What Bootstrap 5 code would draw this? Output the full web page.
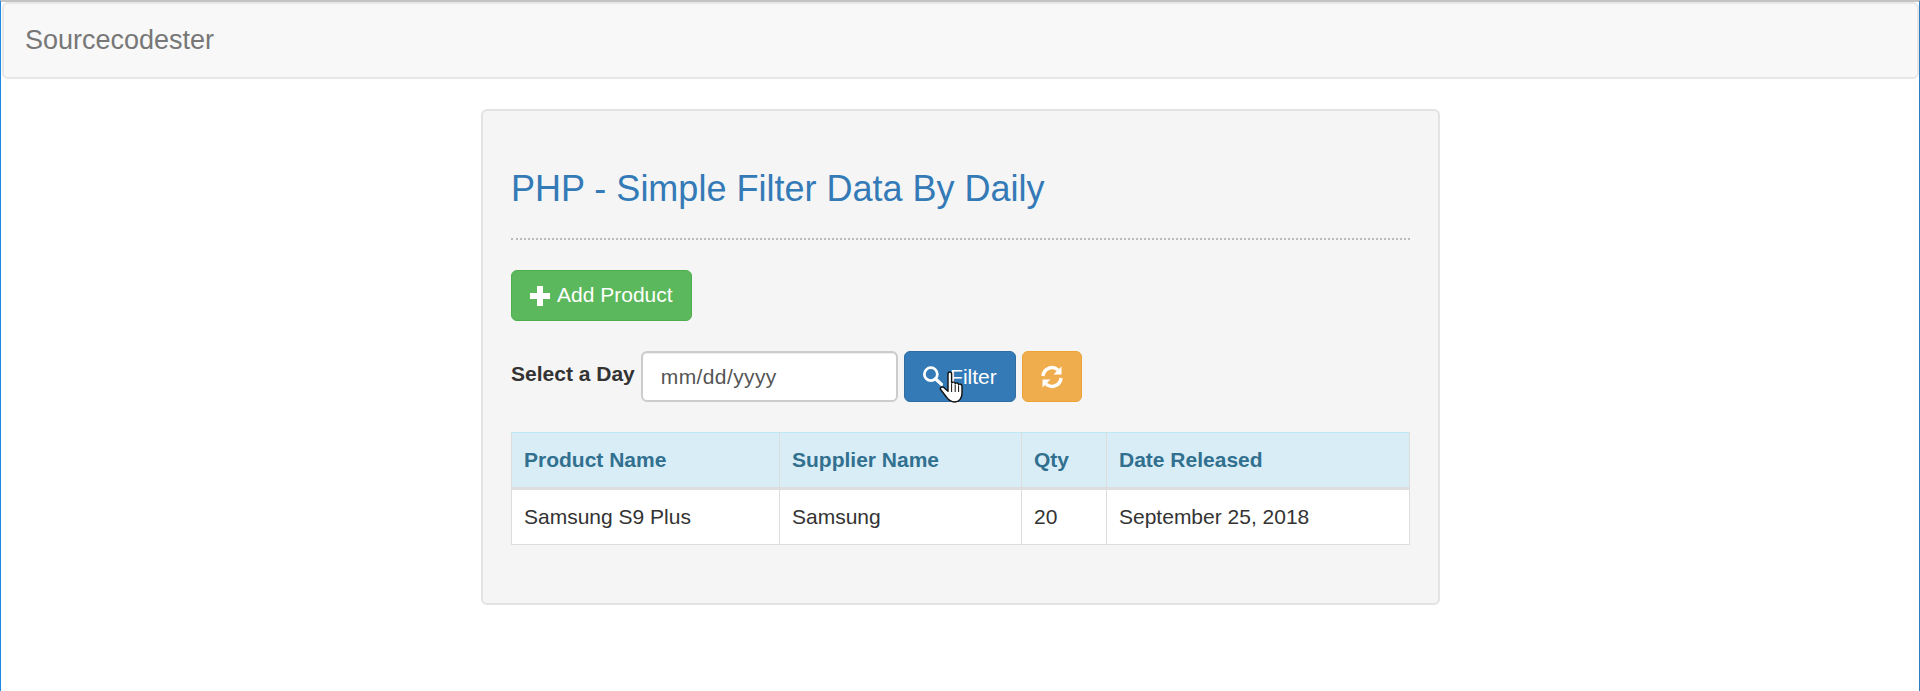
<!DOCTYPE html>
<html lang="en">
<head>
<meta charset="utf-8">
<title>PHP - Simple Filter Data By Daily</title>
<link href="https://cdn.jsdelivr.net/npm/bootstrap@5.3.0/dist/css/bootstrap.min.css" rel="stylesheet">
<style>
html,body{height:100%}
body{font-family:"Liberation Sans",Arial,sans-serif;font-size:21px;line-height:30px;color:#333;background:#fff;border-left:1px solid #1e88e5;border-right:1px solid #2f7fc0;border-top:2px solid #c4c4c4;overflow:hidden}
.top-bar{height:77px;margin:0 0 0 1px;background:#f8f8f8;border:2px solid #e7e7e7;border-radius:6px;padding:0 0 0 21px}
.top-bar .navbar-brand{font-size:27px;color:#777;padding:0;margin:0;line-height:1}
.sheet{width:959px;margin:30px 0 0 480px;height:496px;background:#f5f5f5;border:2px solid #e3e3e3;border-radius:6px;padding:0 28px}
.sheet-title{color:#337ab7;font-size:36px;line-height:40px;font-weight:400;margin:0;padding-top:58px}
.sheet-rule{border:0;border-top:2px dotted #bbb;opacity:1;margin:29px 0 30px}
.act{font-size:21px;line-height:30px;border-width:1.5px;border-radius:6px;padding:9px 18px;height:51px;color:#fff;display:inline-flex;align-items:center;white-space:nowrap}
.act-add{background:#5cb85c;border-color:#4cae4c;width:181px;gap:7px}
.act-add span{margin-top:-2px}
.act-add:hover{background:#5cb85c;border-color:#4cae4c;color:#fff}
.act-filter{background:#337ab7;border-color:#2e6da4;width:112px;position:relative;gap:7px}
.act-filter:hover{background:#337ab7;border-color:#2e6da4;color:#fff}
.act-reset{background:#f0ad4e;border-color:#eea236;width:60px;justify-content:center;padding:0}
.act-reset:hover{background:#f0ad4e;border-color:#eea236;color:#fff}
.filter-row{margin-top:30px;gap:6px}
.filter-label{font-weight:700;margin:0 0 6px;font-size:21px;white-space:nowrap}
.date-box{width:257px;height:51px;font-size:21px;letter-spacing:.4px;border:2px solid #ccc;border-radius:6px;color:#555;padding:9px 18px;flex:none;box-shadow:inset 0 1px 1px rgba(0,0,0,.075);line-height:30px}
.data-table{margin:30px 0 0;width:899px;table-layout:fixed;border-collapse:collapse;font-size:21px;background:#fff}
.data-table th,.data-table td{border:1.5px solid #ddd;padding:12px 12px;line-height:30px;height:56px;vertical-align:middle;color:#333;background:#fff;box-shadow:none}
.data-table thead th{background:#d9edf7;color:#31708f;border-bottom:3px solid #ddd;border-top-color:#bce8f1;font-weight:700}
.c-name{width:268px}.c-supplier{width:242px}.c-qty{width:85px}
.hand{position:absolute;left:34px;top:19px;width:26px;height:32px}
</style>
</head>
<body>
<nav class="navbar top-bar d-flex align-items-center">
  <a class="navbar-brand" href="#">Sourcecodester</a>
</nav>
<main class="sheet">
  <h3 class="sheet-title">PHP - Simple Filter Data By Daily</h3>
  <hr class="sheet-rule">
  <button type="button" class="btn act act-add">
    <svg width="20" height="20" viewBox="0 0 20 20" fill="#fff"><path d="M7 0h6v7h7v6h-7v7H7v-7H0V7h7z"/></svg>
    <span>Add Product</span>
  </button>
  <form class="d-flex align-items-center filter-row">
    <label class="filter-label">Select a Day</label>
    <input type="text" class="form-control date-box" placeholder="mm/dd/yyyy" value="mm/dd/yyyy">
    <button type="button" class="btn act act-filter">
      <svg width="22" height="21" viewBox="0 0 22 21" fill="none" stroke="#fff"><circle cx="8.500" cy="8" r="7" stroke-width="3"/><path d="M13.500 13l6.500 6" stroke-width="3.600" stroke-linecap="round"/></svg>
      <span>Filter</span>
      <svg class="hand" viewBox="0 0 26 32"><path d="M9 3c0-2.600 3.600-2.600 3.600 0v9c1-1.400 3.400-1 3.600.6 1-1.200 3.200-.8 3.400 1 1-1 3.400-.4 3.400 1.600v7c0 4.800-2.600 8.800-7.400 8.800-4 0-6-1.800-8-4.800l-5.800-7.400c-1.400-2 1.200-3.800 3-2.200l4.200 3.600z" fill="#fff" stroke="#111" stroke-width="1.400" stroke-linejoin="round"/><path d="M12.600 13v8M16.200 13.500v7.500M19.600 14.500v6.500" stroke="#111" stroke-width="1"/></svg>
    </button>
    <button type="button" class="btn act act-reset" aria-label="Refresh">
      <svg width="24" height="24" viewBox="0 0 24 24" fill="none" stroke="#fff" stroke-width="3.400"><path d="M3 11a9 9 0 0 1 15-6"/><path d="M21 13a9 9 0 0 1-15 6"/><path d="M21.500 1.500v8h-8z" fill="#fff" stroke="none"/><path d="M2.500 22.500v-8h8z" fill="#fff" stroke="none"/></svg>
    </button>
  </form>
  <table class="table data-table">
    <colgroup><col class="c-name"><col class="c-supplier"><col class="c-qty"><col></colgroup>
    <thead>
      <tr><th>Product Name</th><th>Supplier Name</th><th>Qty</th><th>Date Released</th></tr>
    </thead>
    <tbody>
      <tr><td>Samsung S9 Plus</td><td>Samsung</td><td>20</td><td>September 25, 2018</td></tr>
    </tbody>
  </table>
</main>
<script src="https://cdn.jsdelivr.net/npm/bootstrap@5.3.0/dist/js/bootstrap.bundle.min.js"></script>
</body>
</html>
